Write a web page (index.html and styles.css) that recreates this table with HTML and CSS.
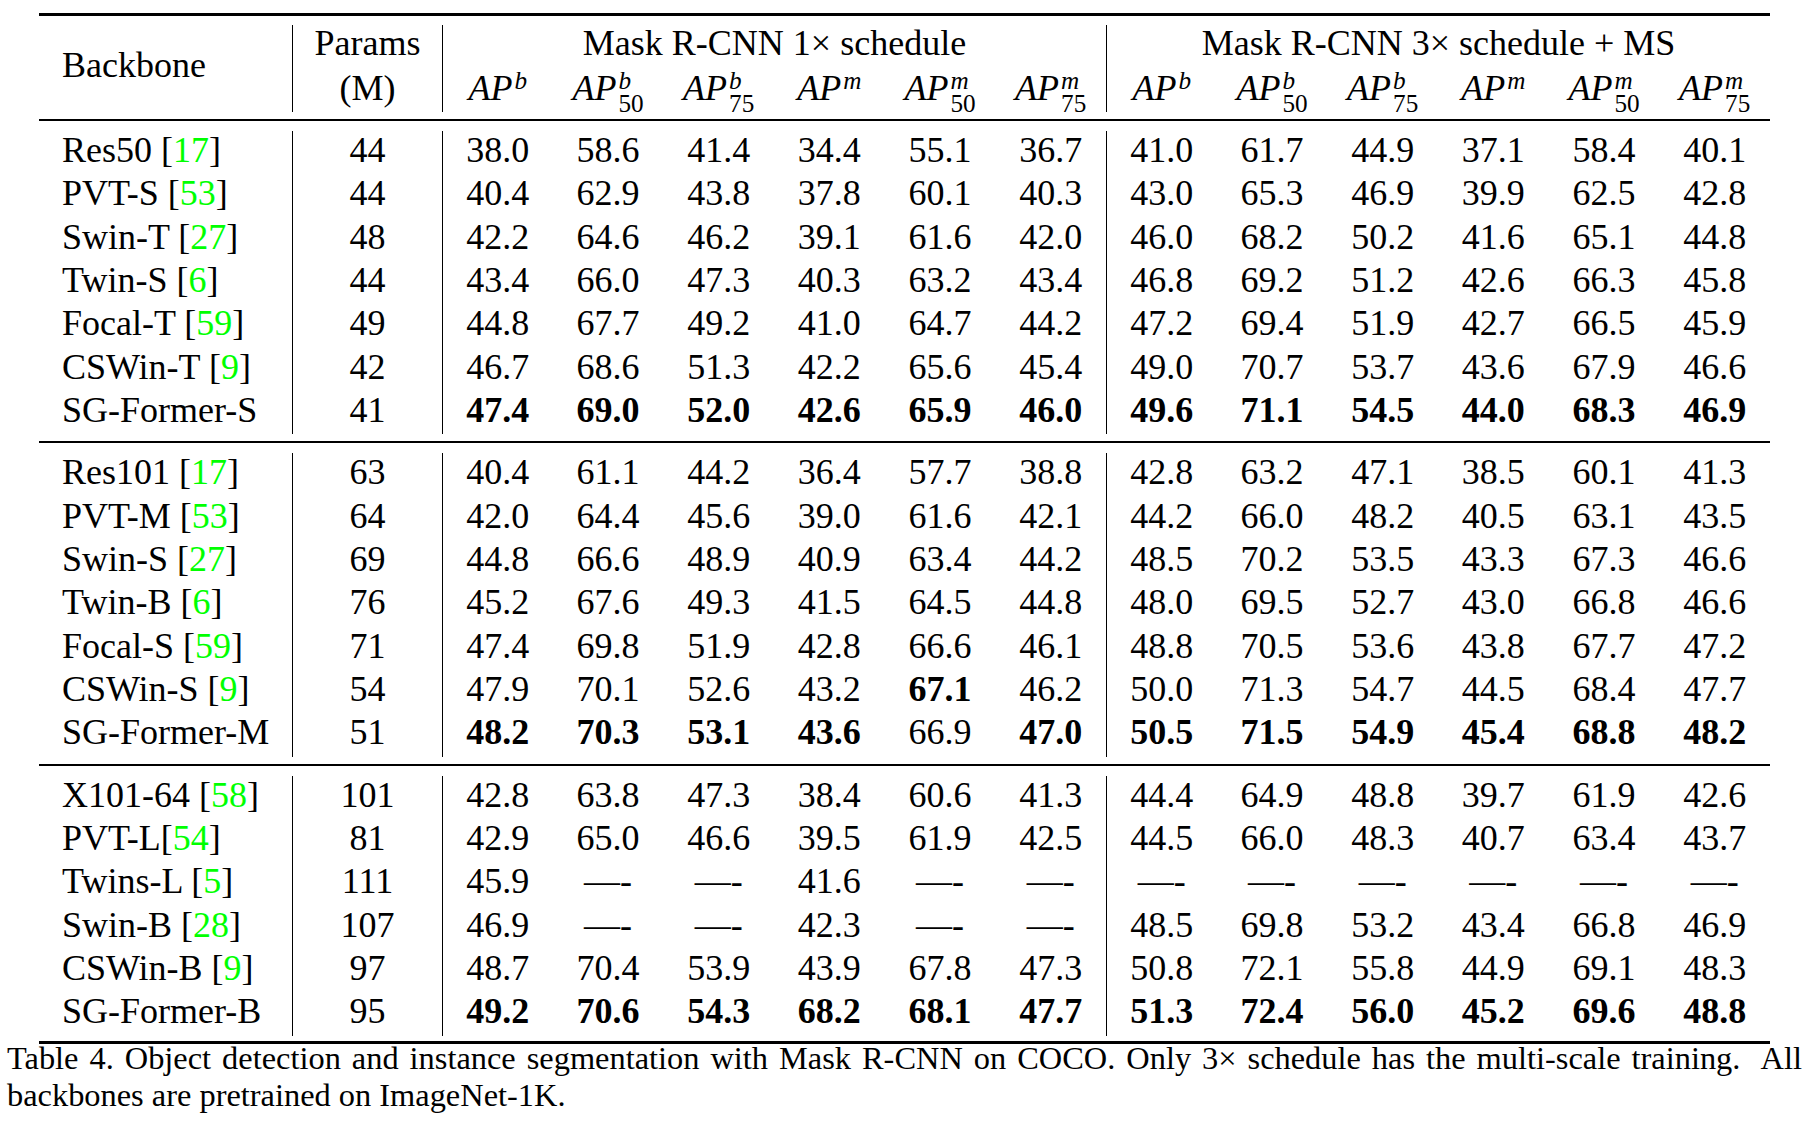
FILE: index.html
```html
<!DOCTYPE html>
<html lang="en">
<head>
<meta charset="utf-8">
<title>Table 4</title>
<link rel="stylesheet" href="styles.css">
</head>
<body>
<div class="page">
  <div class="tbl">
    <div class="rule thick"></div>
    <div class="head">
      <div class="hgrid">
        <div class="c name bbh">Backbone</div>
        <div class="c vl r1">Params</div>
        <div class="c vl r1 g">Mask R-CNN 1× schedule</div>
        <div class="c vl r1 g">Mask R-CNN 3× schedule + MS</div>
        <div class="c vl r2">(M)</div>
        <div class="c vl r2"><span class="ap">AP</span><span class="ss"><span class="it">b</span></span></div>
        <div class="c r2"><span class="ap">AP</span><span class="ss"><span class="it">b</span><span>50</span></span></div>
        <div class="c r2"><span class="ap">AP</span><span class="ss"><span class="it">b</span><span>75</span></span></div>
        <div class="c r2"><span class="ap">AP</span><span class="ss"><span class="it">m</span></span></div>
        <div class="c r2"><span class="ap">AP</span><span class="ss"><span class="it">m</span><span>50</span></span></div>
        <div class="c r2"><span class="ap">AP</span><span class="ss"><span class="it">m</span><span>75</span></span></div>
        <div class="c vl r2"><span class="ap">AP</span><span class="ss"><span class="it">b</span></span></div>
        <div class="c r2"><span class="ap">AP</span><span class="ss"><span class="it">b</span><span>50</span></span></div>
        <div class="c r2"><span class="ap">AP</span><span class="ss"><span class="it">b</span><span>75</span></span></div>
        <div class="c r2"><span class="ap">AP</span><span class="ss"><span class="it">m</span></span></div>
        <div class="c r2"><span class="ap">AP</span><span class="ss"><span class="it">m</span><span>50</span></span></div>
        <div class="c r2"><span class="ap">AP</span><span class="ss"><span class="it">m</span><span>75</span></span></div>
      </div>
    </div>
    <div class="rule"></div>

    <div class="sec">
      <div class="row"><div class="c name">Res50 [<span class="cite">17</span>]</div><div class="c vl">44</div><div class="c vl">38.0</div><div class="c">58.6</div><div class="c">41.4</div><div class="c">34.4</div><div class="c">55.1</div><div class="c">36.7</div><div class="c vl">41.0</div><div class="c">61.7</div><div class="c">44.9</div><div class="c">37.1</div><div class="c">58.4</div><div class="c">40.1</div></div>
      <div class="row"><div class="c name">PVT-S [<span class="cite">53</span>]</div><div class="c vl">44</div><div class="c vl">40.4</div><div class="c">62.9</div><div class="c">43.8</div><div class="c">37.8</div><div class="c">60.1</div><div class="c">40.3</div><div class="c vl">43.0</div><div class="c">65.3</div><div class="c">46.9</div><div class="c">39.9</div><div class="c">62.5</div><div class="c">42.8</div></div>
      <div class="row"><div class="c name">Swin-T [<span class="cite">27</span>]</div><div class="c vl">48</div><div class="c vl">42.2</div><div class="c">64.6</div><div class="c">46.2</div><div class="c">39.1</div><div class="c">61.6</div><div class="c">42.0</div><div class="c vl">46.0</div><div class="c">68.2</div><div class="c">50.2</div><div class="c">41.6</div><div class="c">65.1</div><div class="c">44.8</div></div>
      <div class="row"><div class="c name">Twin-S [<span class="cite">6</span>]</div><div class="c vl">44</div><div class="c vl">43.4</div><div class="c">66.0</div><div class="c">47.3</div><div class="c">40.3</div><div class="c">63.2</div><div class="c">43.4</div><div class="c vl">46.8</div><div class="c">69.2</div><div class="c">51.2</div><div class="c">42.6</div><div class="c">66.3</div><div class="c">45.8</div></div>
      <div class="row"><div class="c name">Focal-T [<span class="cite">59</span>]</div><div class="c vl">49</div><div class="c vl">44.8</div><div class="c">67.7</div><div class="c">49.2</div><div class="c">41.0</div><div class="c">64.7</div><div class="c">44.2</div><div class="c vl">47.2</div><div class="c">69.4</div><div class="c">51.9</div><div class="c">42.7</div><div class="c">66.5</div><div class="c">45.9</div></div>
      <div class="row"><div class="c name">CSWin-T [<span class="cite">9</span>]</div><div class="c vl">42</div><div class="c vl">46.7</div><div class="c">68.6</div><div class="c">51.3</div><div class="c">42.2</div><div class="c">65.6</div><div class="c">45.4</div><div class="c vl">49.0</div><div class="c">70.7</div><div class="c">53.7</div><div class="c">43.6</div><div class="c">67.9</div><div class="c">46.6</div></div>
      <div class="row"><div class="c name">SG-Former-S</div><div class="c vl">41</div><div class="c vl b">47.4</div><div class="c b">69.0</div><div class="c b">52.0</div><div class="c b">42.6</div><div class="c b">65.9</div><div class="c b">46.0</div><div class="c vl b">49.6</div><div class="c b">71.1</div><div class="c b">54.5</div><div class="c b">44.0</div><div class="c b">68.3</div><div class="c b">46.9</div></div>
    </div>
    <div class="rule"></div>

    <div class="sec">
      <div class="row"><div class="c name">Res101 [<span class="cite">17</span>]</div><div class="c vl">63</div><div class="c vl">40.4</div><div class="c">61.1</div><div class="c">44.2</div><div class="c">36.4</div><div class="c">57.7</div><div class="c">38.8</div><div class="c vl">42.8</div><div class="c">63.2</div><div class="c">47.1</div><div class="c">38.5</div><div class="c">60.1</div><div class="c">41.3</div></div>
      <div class="row"><div class="c name">PVT-M [<span class="cite">53</span>]</div><div class="c vl">64</div><div class="c vl">42.0</div><div class="c">64.4</div><div class="c">45.6</div><div class="c">39.0</div><div class="c">61.6</div><div class="c">42.1</div><div class="c vl">44.2</div><div class="c">66.0</div><div class="c">48.2</div><div class="c">40.5</div><div class="c">63.1</div><div class="c">43.5</div></div>
      <div class="row"><div class="c name">Swin-S [<span class="cite">27</span>]</div><div class="c vl">69</div><div class="c vl">44.8</div><div class="c">66.6</div><div class="c">48.9</div><div class="c">40.9</div><div class="c">63.4</div><div class="c">44.2</div><div class="c vl">48.5</div><div class="c">70.2</div><div class="c">53.5</div><div class="c">43.3</div><div class="c">67.3</div><div class="c">46.6</div></div>
      <div class="row"><div class="c name">Twin-B [<span class="cite">6</span>]</div><div class="c vl">76</div><div class="c vl">45.2</div><div class="c">67.6</div><div class="c">49.3</div><div class="c">41.5</div><div class="c">64.5</div><div class="c">44.8</div><div class="c vl">48.0</div><div class="c">69.5</div><div class="c">52.7</div><div class="c">43.0</div><div class="c">66.8</div><div class="c">46.6</div></div>
      <div class="row"><div class="c name">Focal-S [<span class="cite">59</span>]</div><div class="c vl">71</div><div class="c vl">47.4</div><div class="c">69.8</div><div class="c">51.9</div><div class="c">42.8</div><div class="c">66.6</div><div class="c">46.1</div><div class="c vl">48.8</div><div class="c">70.5</div><div class="c">53.6</div><div class="c">43.8</div><div class="c">67.7</div><div class="c">47.2</div></div>
      <div class="row"><div class="c name">CSWin-S [<span class="cite">9</span>]</div><div class="c vl">54</div><div class="c vl">47.9</div><div class="c">70.1</div><div class="c">52.6</div><div class="c">43.2</div><div class="c b">67.1</div><div class="c">46.2</div><div class="c vl">50.0</div><div class="c">71.3</div><div class="c">54.7</div><div class="c">44.5</div><div class="c">68.4</div><div class="c">47.7</div></div>
      <div class="row"><div class="c name">SG-Former-M</div><div class="c vl">51</div><div class="c vl b">48.2</div><div class="c b">70.3</div><div class="c b">53.1</div><div class="c b">43.6</div><div class="c">66.9</div><div class="c b">47.0</div><div class="c vl b">50.5</div><div class="c b">71.5</div><div class="c b">54.9</div><div class="c b">45.4</div><div class="c b">68.8</div><div class="c b">48.2</div></div>
    </div>
    <div class="rule"></div>

    <div class="sec last">
      <div class="row"><div class="c name">X101-64 [<span class="cite">58</span>]</div><div class="c vl">101</div><div class="c vl">42.8</div><div class="c">63.8</div><div class="c">47.3</div><div class="c">38.4</div><div class="c">60.6</div><div class="c">41.3</div><div class="c vl">44.4</div><div class="c">64.9</div><div class="c">48.8</div><div class="c">39.7</div><div class="c">61.9</div><div class="c">42.6</div></div>
      <div class="row"><div class="c name">PVT-L[<span class="cite">54</span>]</div><div class="c vl">81</div><div class="c vl">42.9</div><div class="c">65.0</div><div class="c">46.6</div><div class="c">39.5</div><div class="c">61.9</div><div class="c">42.5</div><div class="c vl">44.5</div><div class="c">66.0</div><div class="c">48.3</div><div class="c">40.7</div><div class="c">63.4</div><div class="c">43.7</div></div>
      <div class="row"><div class="c name">Twins-L [<span class="cite">5</span>]</div><div class="c vl">111</div><div class="c vl">45.9</div><div class="c">—-</div><div class="c">—-</div><div class="c">41.6</div><div class="c">—-</div><div class="c">—-</div><div class="c vl">—-</div><div class="c">—-</div><div class="c">—-</div><div class="c">—-</div><div class="c">—-</div><div class="c">—-</div></div>
      <div class="row"><div class="c name">Swin-B [<span class="cite">28</span>]</div><div class="c vl">107</div><div class="c vl">46.9</div><div class="c">—-</div><div class="c">—-</div><div class="c">42.3</div><div class="c">—-</div><div class="c">—-</div><div class="c vl">48.5</div><div class="c">69.8</div><div class="c">53.2</div><div class="c">43.4</div><div class="c">66.8</div><div class="c">46.9</div></div>
      <div class="row"><div class="c name">CSWin-B [<span class="cite">9</span>]</div><div class="c vl">97</div><div class="c vl">48.7</div><div class="c">70.4</div><div class="c">53.9</div><div class="c">43.9</div><div class="c">67.8</div><div class="c">47.3</div><div class="c vl">50.8</div><div class="c">72.1</div><div class="c">55.8</div><div class="c">44.9</div><div class="c">69.1</div><div class="c">48.3</div></div>
      <div class="row"><div class="c name">SG-Former-B</div><div class="c vl">95</div><div class="c vl b">49.2</div><div class="c b">70.6</div><div class="c b">54.3</div><div class="c b">68.2</div><div class="c b">68.1</div><div class="c b">47.7</div><div class="c vl b">51.3</div><div class="c b">72.4</div><div class="c b">56.0</div><div class="c b">45.2</div><div class="c b">69.6</div><div class="c b">48.8</div></div>
    </div>
    <div class="rule thick"></div>
  </div>
  <p class="caption">Table 4. Object detection and instance segmentation with Mask R-CNN on COCO. Only 3× schedule has the multi-scale training.&nbsp; All backbones are pretrained on ImageNet-1K.</p>
</div>
</body>
</html>
```

FILE: styles.css
```css
html, body {
  margin: 0;
  padding: 0;
  background: #ffffff;
}

.page {
  padding-top: 13px;
  font-family: "Liberation Serif", "Times New Roman", serif;
  color: #000000;
}

.tbl {
  margin-left: 39px;
  width: 1731px;
  font-size: 36px;
}

.rule {
  height: 2px;
  background: #000000;
}

.rule.thick {
  height: 3px;
}

.head {
  padding: 9px 0 7px;
}

.sec {
  padding: 10px 0 7px;
}

.sec.last {
  padding-bottom: 5.5px;
}

.hgrid {
  display: grid;
  grid-template-columns: 253px 150px repeat(12, 1fr);
  grid-template-rows: 44px 43px;
}

.row {
  display: grid;
  grid-template-columns: 253px 150px repeat(12, 1fr);
  grid-template-rows: 43.333px;
  line-height: 38px;
}

.c {
  text-align: center;
  white-space: nowrap;
}

.name {
  text-align: left;
  padding-left: 23px;
}

.vl {
  border-left: 1px solid #000000;
}

.r1 {
  line-height: 36px;
}

.r2 {
  line-height: 38px;
}

.bbh {
  grid-row: 1 / 3;
  grid-column: 1;
  padding-top: 21px;
  line-height: 38px;
}

.g {
  grid-column: span 6;
}

.ap {
  font-style: italic;
}

.ss {
  display: inline-flex;
  flex-direction: column;
  font-size: 25.2px;
  line-height: 23px;
  vertical-align: 11px;
  margin: -3px 0 -14px 2px;
  text-align: left;
}

.it {
  font-style: italic;
}

.b {
  font-weight: 700;
}

.cite {
  color: #00ff00;
}

.caption {
  margin: -4px 0 0 7px;
  width: 1795px;
  font-size: 32.4px;
  line-height: 37px;
  text-align: justify;
}
```
